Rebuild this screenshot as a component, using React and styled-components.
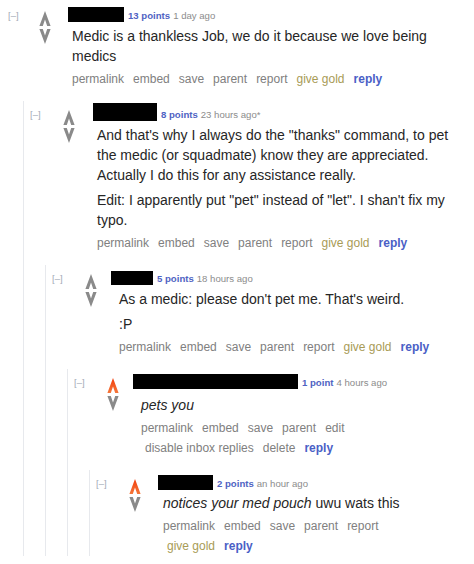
import React from 'react';
import styled, { createGlobalStyle } from 'styled-components';

const Global = createGlobalStyle`
  html, body { margin: 0; padding: 0; background: #fff; }
  body { font-family: "Liberation Sans", Arial, Helvetica, sans-serif; }
`;

const Page = styled.div`
  width: 456px;
  padding-top: 2px;
  background: #fff;
`;

const CommentBox = styled.div`
  padding-top: 8px;
  padding-left: ${p => (p.$nested ? '6px' : '8px')};
  border-left: ${p => (p.$nested ? '1px solid #e7e9ed' : 'none')};
  margin-left: ${p => (p.$nested ? '15px' : '0')};
  margin-right: ${p => (p.$nested ? '4px' : '0')};
  margin-top: ${p => (p.$nested ? '12px' : '0')};
`;

const Row = styled.div`
  display: flex;
  align-items: flex-start;
`;

const Collapse = styled.div`
  flex: 0 0 ${p => (p.$top ? '31px' : '33px')};
  font-size: 9.5px;
  line-height: 12px;
  color: #a3abb7;
`;

const Arrows = styled.div`
  flex: 0 0 12px;
  display: flex;
  flex-direction: column;
  align-items: center;
  gap: 3px;
  margin-top: 1px;
`;

const Entry = styled.div`
  flex: 1;
  min-width: 0;
  margin-left: ${p => (p.$top ? '21px' : '22px')};
`;

const Tagline = styled.div`
  display: flex;
  align-items: flex-end;
  height: 12px;
  font-size: 9.6px;
  line-height: 12px;
  white-space: nowrap;
`;

const Redacted = styled.span`
  display: block;
  flex: 0 0 auto;
  width: ${p => p.$w}px;
  height: ${p => p.$h}px;
  margin-left: ${p => p.$dx}px;
  margin-right: 4px;
  background: #000;
`;

const Score = styled.span`
  font-weight: bold;
  color: #4f63c3;
  margin-right: 3px;
`;

const Time = styled.span`
  color: #8c8c8c;
`;

const Body = styled.div`
  margin-top: ${p => p.$mt ?? 4}px;
  font-size: 14px;
  line-height: 20px;
  color: #262626;

  p { margin: 0; }
  p + p { margin-top: 5px; }
  em { font-style: italic; }
`;

const Buttons = styled.ul`
  display: flex;
  flex-wrap: wrap;
  list-style: none;
  margin: 3px 0 0;
  padding: 0;
  font-size: 12px;
  line-height: 20px;
`;

const Btn = styled.li`
  padding-left: 4px;
  margin-right: 5px;
  white-space: nowrap;
  color: ${p => (p.$kind === 'gold' ? '#a89b56' : p.$kind === 'reply' ? '#4a60c6' : '#808080')};
  font-weight: ${p => (p.$kind === 'reply' ? 'bold' : 'normal')};

  &:first-child { padding-left: 0; }
`;

const ArrowSvg = styled.svg`
  display: block;
  width: 12px;
  height: 15px;
`;

function UpArrow({ voted, id }) {
  return (
    <ArrowSvg viewBox="0 0 12 15">
      {voted && (
        <defs>
          <linearGradient id={id} x1="0" y1="0" x2="0" y2="1">
            <stop offset="0" stopColor="#f23d0c" />
            <stop offset="1" stopColor="#f5773a" />
          </linearGradient>
        </defs>
      )}
      <polygon
        points="6,0 11.6,15 8.2,15 6,8.4 3.8,15 0.4,15"
        fill={voted ? `url(#${id})` : '#8a8a8a'}
      />
    </ArrowSvg>
  );
}

function DownArrow() {
  return (
    <ArrowSvg viewBox="0 0 12 15">
      <polygon points="0.4,0 3.8,0 6,6.6 8.2,0 11.6,0 6,15" fill="#8a8a8a" />
    </ArrowSvg>
  );
}

const std = ['permalink', 'embed', 'save', 'parent', 'report', 'give gold', 'reply'];

const thread = {
  box: { w: 56, h: 15, dx: -4 },
  score: '13 points',
  time: '1 day ago',
  body: [['Medic is a thankless Job, we do it because we love being medics']],
  buttons: std,
  child: {
    box: { w: 64, h: 18, dx: -4 },
    score: '8 points',
    time: '23 hours ago*',
    body: [
      ['And that\'s why I always do the "thanks" command, to pet the medic (or squadmate) know they are appreciated. Actually I do this for any assistance really.'],
      ['Edit: I apparently put "pet" instead of "let". I shan\'t fix my typo.'],
    ],
    buttons: std,
    child: {
      box: { w: 42, h: 14, dx: -8 },
      score: '5 points',
      time: '18 hours ago',
      body: [["As a medic: please don't pet me. That's weird."], [':P']],
      buttons: std,
      child: {
        box: { w: 165, h: 15, dx: -8 },
        score: '1 point',
        time: '4 hours ago',
        voted: true,
        bodyMt: 6,
        body: [[{ em: 'pets you' }]],
        buttons: ['permalink', 'embed', 'save', 'parent', 'edit', 'disable inbox replies', 'delete', 'reply'],
        child: {
          box: { w: 55, h: 15, dx: -5 },
          score: '2 points',
          time: 'an hour ago',
          voted: true,
          bodyMt: 3,
          body: [[{ em: 'notices your med pouch' }, ' uwu wats this']],
          buttons: std,
        },
      },
    },
  },
};

function Comment({ data, depth = 0 }) {
  const top = depth === 0;
  return (
    <CommentBox $nested={!top}>
      <Row>
        <Collapse $top={top}>[–]</Collapse>
        <Arrows>
          <UpArrow voted={data.voted} id={`up-${depth}`} />
          <DownArrow />
        </Arrows>
        <Entry $top={top}>
          <Tagline>
            <Redacted $w={data.box.w} $h={data.box.h} $dx={data.box.dx} />
            <Score>{data.score}</Score>
            <Time>{data.time}</Time>
          </Tagline>
          <Body $mt={data.bodyMt}>
            {data.body.map((para, i) => (
              <p key={i}>
                {para.map((part, j) =>
                  typeof part === 'string' ? part : <em key={j}>{part.em}</em>
                )}
              </p>
            ))}
          </Body>
          <Buttons>
            {data.buttons.map(b => (
              <Btn key={b} $kind={b === 'give gold' ? 'gold' : b === 'reply' ? 'reply' : undefined}>
                {b}
              </Btn>
            ))}
          </Buttons>
        </Entry>
      </Row>
      {data.child && <Comment data={data.child} depth={depth + 1} />}
    </CommentBox>
  );
}

export default function App() {
  return (
    <>
      <Global />
      <Page>
        <Comment data={thread} />
      </Page>
    </>
  );
}
